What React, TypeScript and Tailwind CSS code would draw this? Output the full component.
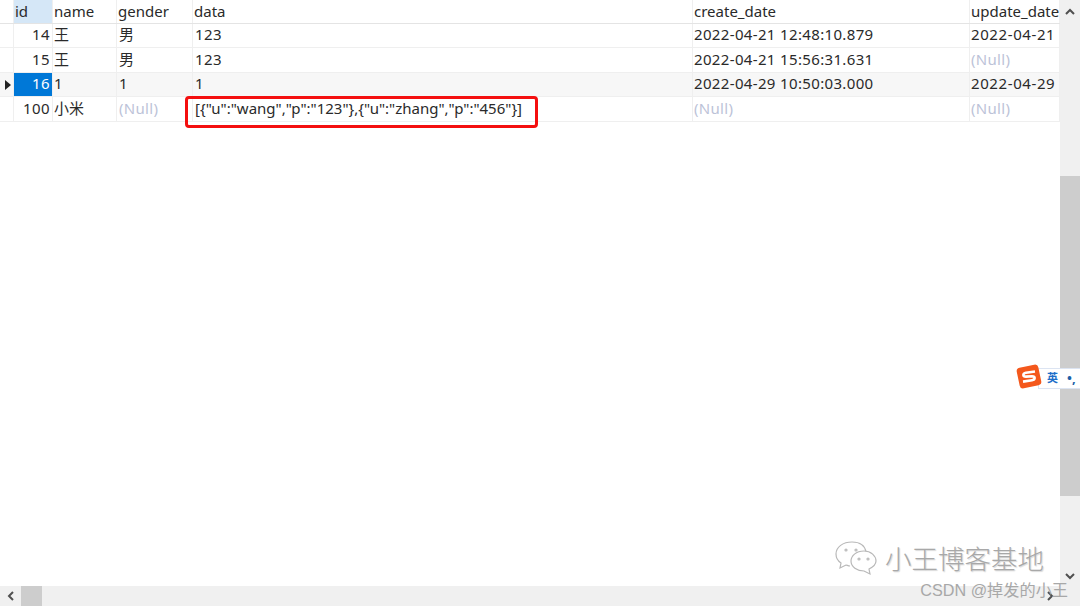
import React from 'react';

const font = 'font-["Noto_Sans","Noto_Sans_CJK_SC",sans-serif]';

const columns = [
  { name: 'id', width: 'w-[39px]' },
  { name: 'name', width: 'w-[64px]' },
  { name: 'gender', width: 'w-[76px]' },
  { name: 'data', width: 'w-[500px]' },
  { name: 'create_date', width: 'w-[277px]' },
  { name: 'update_date', width: 'w-[90px]' },
];

const rows = [
  { h: 'h-[24px]', id: '14', name: '王', gender: '男', data: '123', create: '2022-04-21 12:48:10.879', update: '2022-04-21' },
  { h: 'h-[25px]', id: '15', name: '王', gender: '男', data: '123', create: '2022-04-21 15:56:31.631', update: null },
  { h: 'h-[24px]', id: '16', name: '1', gender: '1', data: '1', create: '2022-04-29 10:50:03.000', update: '2022-04-29', selected: true },
  { h: 'h-[25px]', id: '100', name: '小米', gender: null, data: '[{"u":"wang","p":"123"},{"u":"zhang","p":"456"}]', create: null, update: null },
];

const Cell = ({ width, value, right, active, extra = '', pad = 'pl-[1px]' }: { width: string; value: string | null; right?: boolean; active?: boolean; extra?: string; pad?: string }) => (
  <div
    className={`${width} shrink-0 h-full border-r border-[#efefef] overflow-hidden whitespace-nowrap flex items-center pb-[2px] ${right ? 'justify-end pr-[2px]' : pad} ${active ? 'bg-[#0078d7] text-white' : ''} ${value === null ? 'text-[#bcc3d8] tracking-[0.3px]' : extra}`}
  >
    {value === null ? '(Null)' : value}
  </div>
);

const Chevron = ({ d }: { d: string }) => (
  <svg width="10" height="10" viewBox="0 0 10 10" fill="none" stroke="#505050" strokeWidth="2">
    <path d={d} />
  </svg>
);

export default function App() {
  return (
    <div className={`relative w-[1080px] h-[606px] overflow-hidden bg-white flex flex-col text-[15px] text-[#2a2a2a] ${font}`}>
      <div className="flex flex-1 min-h-0">
        <div className="flex-1 min-w-0 overflow-hidden">
          {/* header */}
          <div className="flex h-[24px] border-b border-[#e4e4e4]">
            <div className="w-[14px] shrink-0 border-r border-[#efefef]" />
            {columns.map((c, i) => (
              <div
                key={c.name}
                className={`${c.width} shrink-0 h-full border-r border-[#efefef] pl-[1px] flex items-center overflow-hidden whitespace-nowrap ${i === 0 ? 'bg-[#d5e7f7]' : ''}`}
              >
                {c.name}
              </div>
            ))}
          </div>
          {/* rows */}
          {rows.map((r) => (
            <div key={r.id} className={`flex ${r.h} border-b border-[#efefef] ${r.selected ? 'bg-[#f7f7f7]' : ''}`}>
              <div className="w-[14px] shrink-0 border-r border-[#efefef] flex items-center justify-center pl-[3px]">
                {r.selected && (
                  <svg width="6" height="10" viewBox="0 0 6 10">
                    <path d="M0 0 L6 5 L0 10 Z" fill="#222" />
                  </svg>
                )}
              </div>
              <Cell width={columns[0].width} value={r.id} right active={r.selected} extra="tracking-[0.4px]" />
              <Cell width={columns[1].width} value={r.name} />
              <Cell width={columns[2].width} value={r.gender} pad="pl-[2px]" />
              <Cell width={columns[3].width} value={r.data} pad="pl-[2px]" extra={r.data.length < 4 ? 'tracking-[0.4px]' : ''} />
              <Cell width={columns[4].width} value={r.create} extra="tracking-[0.35px]" />
              <Cell width={columns[5].width} value={r.update} extra="tracking-[0.6px]" />
            </div>
          ))}
        </div>
        {/* vertical scrollbar */}
        <div className="w-[20px] shrink-0 bg-[#f0f0f0] flex flex-col items-center">
          <div className="h-[24px] flex items-center justify-center">
            <Chevron d="M1 7 L5 3 L9 7" />
          </div>
          <div className="w-full h-[320px] mt-[152px] bg-[#cdcdcd]" />
          <div className="h-[20px] mt-auto flex items-center justify-center">
            <Chevron d="M1 3 L5 7 L9 3" />
          </div>
        </div>
      </div>
      {/* horizontal scrollbar */}
      <div className="h-[20px] shrink-0 bg-[#f0f0f0] flex items-center">
        <div className="w-[21px] flex items-center justify-center">
          <Chevron d="M7 1 L3 5 L7 9" />
        </div>
        <div className="w-[21px] h-full bg-[#cdcdcd]" />
        <div className="flex-1" />
        <div className="w-[20px] flex items-center justify-center mr-[20px]">
          <Chevron d="M3 1 L7 5 L3 9" />
        </div>
      </div>

      {/* red highlight */}
      <div className="absolute left-[185px] top-[96px] w-[353px] h-[32px] border-[3px] border-[#f40f0f] rounded-[4px]" />

      {/* input method badge */}
      <div className="absolute left-[1038px] top-[368px] w-[42px] h-[21px] bg-white border border-[#dce4f2] border-r-0 flex items-center pl-[8px] gap-[9px] text-[11px] font-bold text-[#1d6fc9]">
        <span>英</span>
        <span className="text-[#1d5fa8] text-[13px] leading-none">•,</span>
      </div>
      <svg className="absolute left-[1015px] top-[363px]" width="28" height="27" viewBox="0 0 28 27">
        <rect x="3" y="3" width="22" height="21" rx="3.5" transform="rotate(-12 14 13.5)" fill="#f4581c" />
        <path d="M20 8.5 L11 9.8 C7.5 10.4 7.5 13.6 11 13.6 L17 13.2 C20.5 13.2 20.5 16.8 17 17.3 L8 18.6" fill="none" stroke="#fff" strokeWidth="2.6" />
      </svg>

      {/* watermark */}
      <div className="absolute left-[835px] top-[541px] flex items-center gap-[8px] text-[26.5px] font-light leading-none text-[#a8a8a8] whitespace-nowrap [text-shadow:1px_1px_1px_#d8d8d8]">
        <svg width="42" height="36" viewBox="0 0 42 36" fill="none" stroke="#b8b8b8" strokeWidth="1.2">
          <path d="M17 1 C8 1 1 6 1 13 C1 17 3 20 6 22 L5 27 L11 24 C12 24 13 25 15 25" fill="#fff" />
          <path d="M17 1 C25 1 30 5 31 11" />
          <path d="M29 10 C21 10 16 15 16 20 C16 26 22 30 29 30 L35 33 L34 28 C38 26 41 23 41 20 C41 15 36 10 29 10 Z" fill="#fff" />
          <circle cx="11" cy="9" r="1" />
          <circle cx="21" cy="9" r="1" />
          <circle cx="24" cy="18" r="1" />
          <circle cx="33" cy="18" r="1" />
        </svg>
        <span>小王博客基地</span>
      </div>
      <div className='absolute right-[12px] top-[582px] font-["Liberation_Sans","Noto_Sans_CJK_SC",sans-serif] text-[16.2px] leading-none text-[#a8a8a8] whitespace-nowrap'>CSDN @掉发的小王</div>
    </div>
  );
}
